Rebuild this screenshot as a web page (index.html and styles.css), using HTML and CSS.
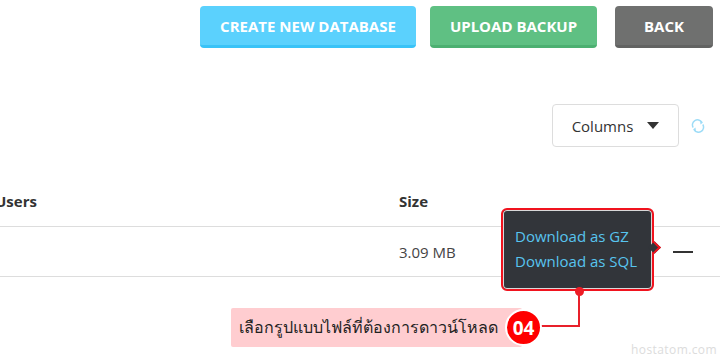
FILE: index.html
```html
<!DOCTYPE html>
<html>
<head>
<meta charset="utf-8">
<link rel="stylesheet" href="styles.css">
</head>
<body>
<div class="page">
  <div class="topbar">
    <button class="btn btn-create">CREATE NEW DATABASE</button>
    <button class="btn btn-upload">UPLOAD BACKUP</button>
    <button class="btn btn-back">BACK</button>
  </div>
  <div class="toolbar">
    <button class="columns">Columns <span class="caret"></span></button>
    <svg class="refresh" width="14" height="14" viewBox="0 0 14 14">
      <path d="M2.2 8.5A5 5 0 0 1 10.8 3.2" fill="none" stroke="#9edcf7" stroke-width="1.5"/>
      <path d="M11.8 5.5A5 5 0 0 1 3.2 10.8" fill="none" stroke="#9edcf7" stroke-width="1.5"/>
      <path d="M9 1.5L12 3.5L9.5 5.5Z" fill="#9edcf7"/>
      <path d="M5 12.5L2 10.5L4.5 8.5Z" fill="#9edcf7"/>
    </svg>
  </div>
  <div class="table">
    <div class="row head">
      <div class="c-users">Users</div>
      <div class="c-size">Size</div>
      <div class="c-act"></div>
    </div>
    <div class="row body">
      <div class="c-users"></div>
      <div class="c-size">3.09 MB</div>
      <div class="c-act"><span class="minus"></span></div>
    </div>
  </div>

  <div class="tip">
    <a>Download as GZ</a>
    <a>Download as SQL</a>
    <span class="tip-arrow"></span>
    <span class="dot"></span>
  </div>
  <div class="connector"></div>
  <div class="note">
    <span class="note-text">เลือกรูปแบบไฟล์ที่ต้องการดาวน์โหลด</span>
    <span class="badge">04</span>
  </div>
  <div class="watermark">hostatom.com</div>
</div>
</body>
</html>
```
FILE: styles.css
```css
* { box-sizing: border-box; }
html, body { margin: 0; padding: 0; background: #fff; }
body { font-family: "Open Sans", "Noto Sans", sans-serif; color: #333; }
.page { position: relative; width: 720px; height: 360px; overflow: hidden; }

.topbar { display: flex; justify-content: flex-end; padding: 6px 7px 0 0; height: 48px; }
.btn {
  font-family: "Open Sans", sans-serif; font-weight: 700; font-size: 15px;
  color: #fff; border: 0; border-radius: 4px; height: 42px; padding: 0;
  border-bottom: 3px solid transparent;
}
.btn-create { width: 216px; background: #5bd1fd; border-bottom-color: #39c3f7; }
.btn-upload { width: 167px; background: #5fc083; border-bottom-color: #4cb071; margin-left: 14px; }
.btn-back { width: 98px; background: #6f706f; border-bottom-color: #626362; margin-left: 18px; }

.toolbar { display: flex; justify-content: flex-end; align-items: center; padding: 56px 15px 0 0; }
.columns {
  width: 127px; height: 43px; background: #fff; border: 1px solid #ddd; border-radius: 4px;
  font-family: "Open Sans", sans-serif; font-size: 15px; color: #333;
  display: flex; align-items: center; justify-content: center; gap: 14px; padding: 0 0 0 0;
}
.caret { width: 0; height: 0; border-left: 6px solid transparent; border-right: 6px solid transparent; border-top: 7px solid #333; }
.refresh { margin-left: 12px; }

.table { margin-top: 29px; margin-left: -5px; width: 725px; }
.row { display: flex; align-items: center; border-bottom: 1px solid #ddd; font-size: 15px; }
.row.head { height: 51px; font-weight: 700; color: #333; }
.row.body { height: 50px; color: #444; }
.c-users { width: 404px; }
.c-size { width: 274px; }
.c-act { flex: 1; }
.minus { display: block; width: 20px; height: 2px; background: #333; }

.tip {
  position: absolute; left: 501px; top: 208px; width: 153px; height: 83px;
  background: #32353a; border: 2px solid #f0131e; border-radius: 6px;
  box-shadow: inset 0 0 0 1px #d8d8d8;
  padding: 14px 0 0 12px; display: flex; flex-direction: column; gap: 1px;
}
.tip a { color: #58c4ef; font-size: 15px; line-height: 24px; }
.tip-arrow {
  position: absolute; right: -7px; top: 33px; width: 9px; height: 9px;
  background: #32353a; border-top: 2px solid #f0131e; border-right: 2px solid #f0131e;
  transform: rotate(45deg);
}
.dot { position: absolute; left: 72px; bottom: -7px; width: 9px; height: 9px; border-radius: 50%; background: #ee1c25; }
.connector {
  position: absolute; left: 540px; top: 292px; width: 40px; height: 35px;
  border-right: 2px solid #e8202a; border-bottom: 2px solid #e8202a;
}
.note { position: absolute; left: 231px; top: 308px; display: flex; align-items: center; }
.note-text {
  background: #ffcdd0; height: 39px; padding: 0 24px 0 8px; display: flex; align-items: center;
  font-family: "Noto Sans", "Open Sans", sans-serif; font-size: 16px; color: #222; border-radius: 2px;
}
.badge {
  margin-left: -17px; width: 37px; height: 37px; border-radius: 50%; background: #f00;
  border: 2px solid #fff; color: #fff; font-weight: 700; font-size: 19px;
  display: flex; align-items: center; justify-content: center;
}
.watermark { position: absolute; right: 3px; bottom: 2px; font-size: 12px; color: #dcdcdc; letter-spacing: 0.4px; }
```
